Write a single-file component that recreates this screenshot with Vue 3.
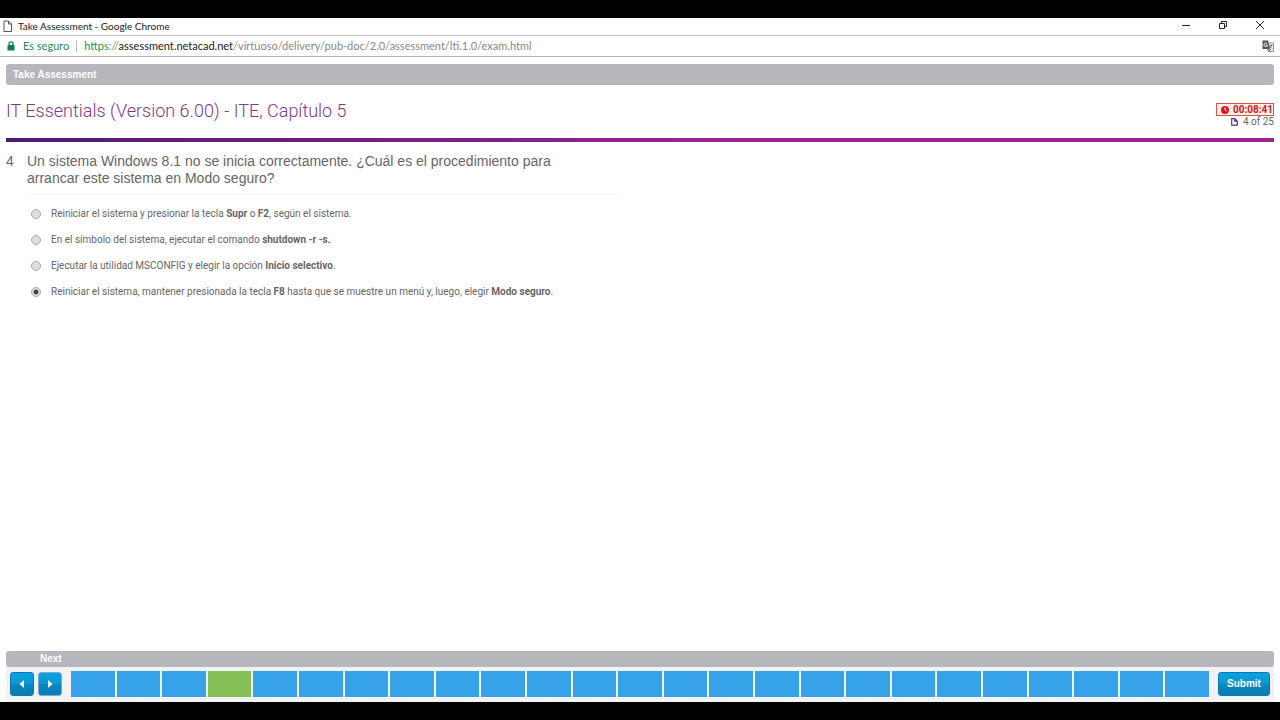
<script setup>
import { ref } from 'vue'

const selected = ref(3)
const current = ref(4)
const total = 25
const options = [
  [{ t: 'Reiniciar el sistema y presionar la tecla ' }, { t: 'Supr', b: true }, { t: ' o ' }, { t: 'F2', b: true }, { t: ', según el sistema.' }],
  [{ t: 'En el símbolo del sistema, ejecutar el comando ' }, { t: 'shutdown -r -s.', b: true }],
  [{ t: 'Ejecutar la utilidad MSCONFIG y elegir la opción ' }, { t: 'Inicio selectivo', b: true }, { t: '.' }],
  [{ t: 'Reiniciar el sistema, mantener presionada la tecla ' }, { t: 'F8', b: true }, { t: ' hasta que se muestre un menú y, luego, elegir ' }, { t: 'Modo seguro', b: true }, { t: '.' }]
]
</script>

<template>
  <div class="screen">
    <div class="window">
      <header class="titlebar">
        <svg class="doc" viewBox="0 0 9 12" width="9" height="12"><path d="M1 1h4.500l3 3v7.500H1zM5.500 1v3h3" fill="none" stroke="#555" /></svg>
        <span class="wintitle">Take Assessment - Google Chrome</span>
        <div class="controls">
          <button aria-label="Minimizar"><svg viewBox="0 0 10 10" width="10" height="10"><path d="M1 5.500h8" stroke="#222" /></svg></button>
          <button aria-label="Restaurar"><svg viewBox="0 0 10 10" width="10" height="10"><path d="M1.500 3.500h5v5h-5zM3.500 3V1.500h5v5H7" fill="none" stroke="#222" /></svg></button>
          <button aria-label="Cerrar"><svg viewBox="0 0 10 10" width="10" height="10"><path d="M1 1l8 8M9 1L1 9" stroke="#222" /></svg></button>
        </div>
      </header>
      <div class="address">
        <svg class="lock" viewBox="0 0 8 10" width="8" height="10"><path d="M2 5V2.800a2 2 0 0 1 4 0V5" fill="none" stroke="#0b8043" stroke-width="1.300" /><rect x="0.500" y="4" width="7" height="5.500" rx="0.500" fill="#0b8043" /></svg>
        <span class="secure">Es seguro</span>
        <span class="sep"></span>
        <span class="url"><span class="scheme">https</span>://<span class="host">assessment.netacad.net</span>/virtuoso/delivery/pub-doc/2.0/assessment/lti.1.0/exam.html</span>
        <button class="translate" aria-label="Traducir">
          <svg viewBox="0 0 12 12" width="12" height="12"><path d="M5 3h6.500v8.500H7L5 9z" fill="#eee" stroke="#999" /><path d="M0.500 0.500h5.500l2 8.500H0.500z" fill="#555" /><path d="M5 3.500A1.800 1.800 0 1 0 5.500 5H3.800" fill="none" stroke="#fff" stroke-width="0.900" /><path d="M7 9l-.5 2.500L9 9M7.500 5.500h3M9 4.500v1c0 1-1 2-1.500 2.500M8 6.500l2 2" fill="none" stroke="#555" stroke-width="0.800" /></svg>
        </button>
      </div>

      <main class="page">
        <div class="bar">Take Assessment</div>
        <div class="heading">
          <h1>IT Essentials (Version 6.00) - ITE, Capítulo 5</h1>
          <div class="status">
            <div class="timer">
              <svg viewBox="0 0 8 8" width="8" height="8"><circle cx="4" cy="4" r="4" fill="#d8141c" /><path d="M4 1.500V4l1.800 1" fill="none" stroke="#fff" /></svg>
              <span>00:08:41</span>
            </div>
            <div class="count">
              <svg viewBox="0 0 7 8" width="7" height="8"><path d="M.7.7h3.100l2.500 2.500v4H.7zM3.800.7v2.500h2.500" fill="none" stroke="#6b2a83" stroke-width="1.200" /></svg>
              <span>{{ current }} of {{ total }}</span>
            </div>
          </div>
        </div>
        <div class="rule"></div>

        <section class="question">
          <span class="num">4</span>
          <div class="body">
            <h2 id="q">Un sistema Windows 8.1 no se inicia correctamente. ¿Cuál es el procedimiento para arrancar este sistema en Modo seguro?</h2>
            <div class="options" role="radiogroup" aria-labelledby="q">
              <label v-for="(o, i) in options" :key="i">
                <input v-model="selected" type="radio" name="answer" :value="i" />
                <span><template v-for="(p, j) in o" :key="j"><b v-if="p.b">{{ p.t }}</b><template v-else>{{ p.t }}</template></template></span>
              </label>
            </div>
          </div>
        </section>
      </main>

      <footer>
        <div class="nextbar">Next</div>
        <div class="nav">
          <button class="btn arrow" aria-label="Anterior"><svg viewBox="0 0 6 8" width="6" height="8"><path d="M5 0v8L0.500 4z" fill="#fff" /></svg></button>
          <button class="btn arrow next" aria-label="Siguiente"><svg viewBox="0 0 6 8" width="6" height="8"><path d="M1 0v8l4.500-4z" fill="#fff" /></svg></button>
          <div class="cells">
            <button v-for="n in total" :key="n" :class="{ on: n === current }" :aria-label="'Pregunta ' + n" @click="current = n"></button>
          </div>
          <button class="btn submit">Submit</button>
        </div>
      </footer>
    </div>
  </div>
</template>

<style>
body {
  background: #000;
}
</style>

<style scoped>
* {
  box-sizing: border-box;
}
button {
  border: 0;
  padding: 0;
  background: none;
  font: inherit;
}
svg {
  display: block;
  flex: none;
}
.screen {
  min-height: 100vh;
  padding: 18px 0;
  display: flex;
  background: #000;
  font-family: "Liberation Sans", Arial, sans-serif;
  color: #666;
}
.window {
  flex: 1;
  display: flex;
  flex-direction: column;
  background: #fff;
}
.titlebar {
  height: 18px;
  display: flex;
  align-items: center;
  padding: 0 15px 2px 3px;
  border-bottom: 1px solid #c4c4c4;
  font: 10px/16px Lato, "Noto Sans", sans-serif;
  color: #222;
}
.wintitle {
  margin-left: 6px;
}
.controls {
  margin-left: auto;
  display: flex;
  gap: 27px;
  padding-bottom: 2px;
}
.address {
  height: 21px;
  display: flex;
  align-items: center;
  padding: 0 6px 0 7px;
  border-bottom: 1px solid #b8b8b8;
  font: 11px/20px Lato, "Noto Sans", sans-serif;
  color: #888;
}
.secure,
.scheme {
  color: #2b8a57;
}
.secure {
  margin-left: 8px;
}
.sep {
  width: 1px;
  height: 12px;
  margin: 0 7px;
  background: #bbb;
}
.host {
  color: #222;
}
.translate {
  margin-left: auto;
}
.page {
  flex: 1;
  padding: 7px 6px 0;
}
.bar,
.nextbar {
  border-radius: 3px;
  background: #b6b6bc;
  color: #fff;
  font-weight: bold;
  font-size: 10px;
}
.bar {
  line-height: 21px;
  padding: 0 7px;
}
.heading {
  display: flex;
  justify-content: space-between;
  height: 53px;
}
h1 {
  margin: 0;
  padding-top: 14px;
  font: 300 18px/24px Roboto, "Liberation Sans", sans-serif;
  color: #7d3a8c;
}
.status {
  padding-top: 18px;
  font: 10px/12px Roboto, sans-serif;
}
.timer,
.count {
  display: flex;
  align-items: center;
  justify-content: flex-end;
}
.timer {
  gap: 4px;
  padding: 0 0 0 4px;
  border: 1px solid #d9534f;
  background: #fbeee6;
  color: #c22;
  font-weight: bold;
  line-height: 11px;
}
.count {
  gap: 5px;
}
.rule {
  height: 4px;
  background: linear-gradient(90deg, #4f1a70, #9c2590 60%, #9c2590);
}
.question {
  display: flex;
  padding-top: 11px;
  font-size: 14px;
  line-height: 17px;
}
.num {
  width: 21px;
}
.body {
  flex: 0 1 593px;
}
h2 {
  margin: 0;
  padding: 0 40px 7px 0;
  border-bottom: 1px solid #f5f5f5;
  font: inherit;
}
.options {
  display: flex;
  flex-direction: column;
  gap: 10px;
  padding: 11px 0 0 4px;
}
.options label {
  display: flex;
  align-items: center;
  gap: 10px;
  font: 10px/16px Roboto, "Liberation Sans", sans-serif;
}
.options input {
  appearance: none;
  width: 10px;
  height: 10px;
  margin: 0;
  border: 1px solid #aaa;
  border-radius: 50%;
  background: #ddd;
}
.options input:checked {
  background: radial-gradient(circle, #444 2px, #e4e4e4 3px);
}
footer {
  padding: 0 6px;
}
.nextbar {
  line-height: 16px;
  padding: 0 34px;
}
.nav {
  display: flex;
  align-items: center;
  height: 35px;
  padding: 0 4px 2px;
  background: #f2f2f3;
}
.btn {
  height: 24px;
  border: 1px solid #0a78ae;
  border-radius: 3px;
  background: linear-gradient(#0aa2e0, #0a97d4 50%, #0a86c0 51%, #0a7db4);
  color: #fff;
  font-size: 10px;
  font-weight: bold;
}
.arrow {
  width: 24px;
  display: flex;
  align-items: center;
  justify-content: center;
}
.next {
  margin-left: 4px;
  border-color: #79abd9;
}
.cells {
  flex: 1;
  display: grid;
  grid-template-columns: repeat(25, 1fr);
  gap: 2px;
  margin: 0 9px;
}
.cells button {
  height: 26px;
  background: #36a2e8;
}
.cells .on {
  background: #85c157;
}
.submit {
  width: 52px;
}
</style>
